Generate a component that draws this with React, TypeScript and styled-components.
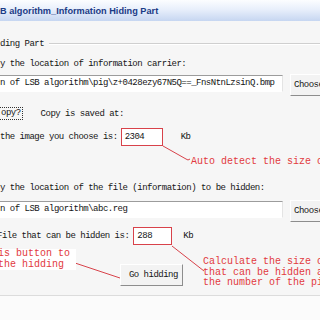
import React from 'react';
import styled, { createGlobalStyle } from 'styled-components';

const GlobalStyle = createGlobalStyle`
  html, body {
    margin: 0;
    padding: 0;
    background: #f6f6f6;
    overflow: hidden;
  }
`;

const mono = `"Liberation Mono", "DejaVu Sans Mono", monospace`;

const Window = styled.div`
  position: relative;
  width: 320px;
  height: 320px;
  overflow: hidden;
  display: flex;
  flex-direction: column;
  background: #f6f6f6;
  font-family: ${mono};
  font-size: 9px;
  letter-spacing: -0.5px;
  color: #151515;
`;

const TitleBar = styled.div`
  height: 21px;
  flex-shrink: 0;
  display: flex;
  align-items: center;
  padding-top: 1px;
  box-sizing: border-box;
  background: linear-gradient(#fcfdff 0%, #e8effb 45%, #c6d6f1 100%);
  font-family: "Liberation Sans", Arial, sans-serif;
  font-weight: bold;
  font-size: 9.2px;
  letter-spacing: 0;
  color: #1b3b86;
  white-space: nowrap;
`;

const Body = styled.div`
  flex: 1;
  display: flex;
  flex-direction: column;
`;

const GroupRow = styled.div`
  margin-top: 16px;
  height: 14px;
  display: flex;
  align-items: center;
  white-space: nowrap;
`;

const GroupLine = styled.div`
  flex: 1;
  margin-left: 5px;
  border-top: 1px solid #cfcfcf;
  border-bottom: 1px solid #ffffff;
`;

const Label = styled.div<{ $top?: number }>`
  margin-top: ${(p) => p.$top ?? 0}px;
  height: 14px;
  line-height: 14px;
  white-space: nowrap;
`;

const InputRow = styled.div<{ $top: number }>`
  margin-top: ${(p) => p.$top}px;
  height: 20px;
  display: flex;
  align-items: flex-start;
  gap: 7px;
`;

const Field = styled.div`
  margin-top: 1px;
  width: 283px;
  flex-shrink: 0;
  height: 17px;
  box-sizing: border-box;
  background: #ffffff;
  border-top: 1px solid #9c9c9c;
  border-right: 1px solid #e4e4e4;
  border-bottom: 1px solid #ffffff;
  line-height: 15px;
  white-space: nowrap;
  overflow: hidden;
`;

const Button = styled.div<{ $width: number }>`
  width: ${(p) => p.$width}px;
  height: 22px;
  flex-shrink: 0;
  box-sizing: border-box;
  background: #f3f3f3;
  border-top: 1px solid #ffffff;
  border-left: 1px solid #ffffff;
  border-bottom: 1px solid #8d8d8d;
  border-right: 1px solid #8d8d8d;
  display: flex;
  align-items: center;
  padding-left: 3px;
  white-space: nowrap;
  overflow: hidden;
`;

const CopyRow = styled.div`
  margin-top: 10px;
  height: 19px;
  display: flex;
  align-items: center;
  gap: 18px;
  white-space: nowrap;
`;

const FocusLink = styled.span`
  border: 1px dotted #333;
  border-left: none;
  padding: 0 1px;
  line-height: 11px;
`;

const SizeRow = styled.div<{ $top: number; $shift?: number }>`
  margin-top: ${(p) => p.$top}px;
  margin-left: ${(p) => p.$shift ?? 0}px;
  height: 18px;
  display: flex;
  align-items: center;
  white-space: nowrap;
`;

const RedBox = styled.div<{ $width: number; $before: number; $gap: number }>`
  width: ${(p) => p.$width}px;
  height: 18px;
  box-sizing: border-box;
  margin-left: ${(p) => p.$before}px;
  margin-right: ${(p) => p.$gap}px;
  border: 1px solid #d8424a;
  background: #ffffff;
  padding-left: 3px;
  line-height: 16px;
`;

const GoRow = styled.div`
  margin-top: 19px;
  padding-left: 120px;
  display: flex;
`;

const Footer = styled.div`
  margin-top: 9px;
  flex: 1;
  border-top: 1px solid #dcdcdc;
  background: #fbfbfb;
`;

const Note = styled.div<{ $x: number; $y: number; $bg?: boolean }>`
  position: absolute;
  left: ${(p) => p.$x}px;
  top: ${(p) => p.$y}px;
  font-family: ${mono};
  font-size: 10px;
  letter-spacing: 0;
  line-height: 10.5px;
  color: #e23a40;
  white-space: pre;
  background: ${(p) => (p.$bg ? '#ffffff' : 'transparent')};
`;

const Overlay = styled.svg`
  position: absolute;
  left: 0;
  top: 0;
  pointer-events: none;
`;

export default function App() {
  return (
    <>
      <GlobalStyle />
      <Window>
        <TitleBar>B algorithm_Information Hiding Part</TitleBar>
        <Body>
          <GroupRow>
            ding Part
            <GroupLine />
          </GroupRow>
          <Label $top={6}>y the location of information carrier:</Label>
          <InputRow $top={3}>
            <Field>n of LSB algorithm\pig\z+0428ezy67N5Q==_FnsNtnLzsinQ.bmp</Field>
            <Button $width={40}>Choose</Button>
          </InputRow>
          <CopyRow>
            <FocusLink>opy?</FocusLink>
            <span>Copy is saved at:</span>
          </CopyRow>
          <SizeRow $top={5}>
            the image you choose is:
            <RedBox $width={42} $before={3} $gap={18}>2304</RedBox>
            Kb
          </SizeRow>
          <Label $top={35}>y the location of the file (information) to be hidden:</Label>
          <InputRow $top={5}>
            <Field>n of LSB algorithm\abc.reg</Field>
            <Button $width={40}>Choose</Button>
          </InputRow>
          <SizeRow $top={7} $shift={-3}>
            File that can be hidden is:
            <RedBox $width={39} $before={4} $gap={11}>288</RedBox>
            Kb
          </SizeRow>
          <GoRow>
            <Button $width={63}>&nbsp;Go hidding</Button>
          </GoRow>
          <Footer />
        </Body>

        <Overlay width={320} height={320} viewBox="0 0 320 320">
          <g stroke="#d8424a" strokeWidth={1} fill="none">
            <path d="M163 146 L186 159 Q188 161 190 159" />
            <path d="M172 246 L204 271" />
            <path d="M72 262 L120 278" />
          </g>
        </Overlay>
        <Note $x={191} $y={157}>Auto detect the size of</Note>
        <Note $x={-2} $y={249} $bg>{'is button to \nthe hidding '}</Note>
        <Note $x={203} $y={257}>
          {'Calculate the size of\nthat can be hidden a\nthe number of the pi'}
        </Note>
      </Window>
    </>
  );
}
